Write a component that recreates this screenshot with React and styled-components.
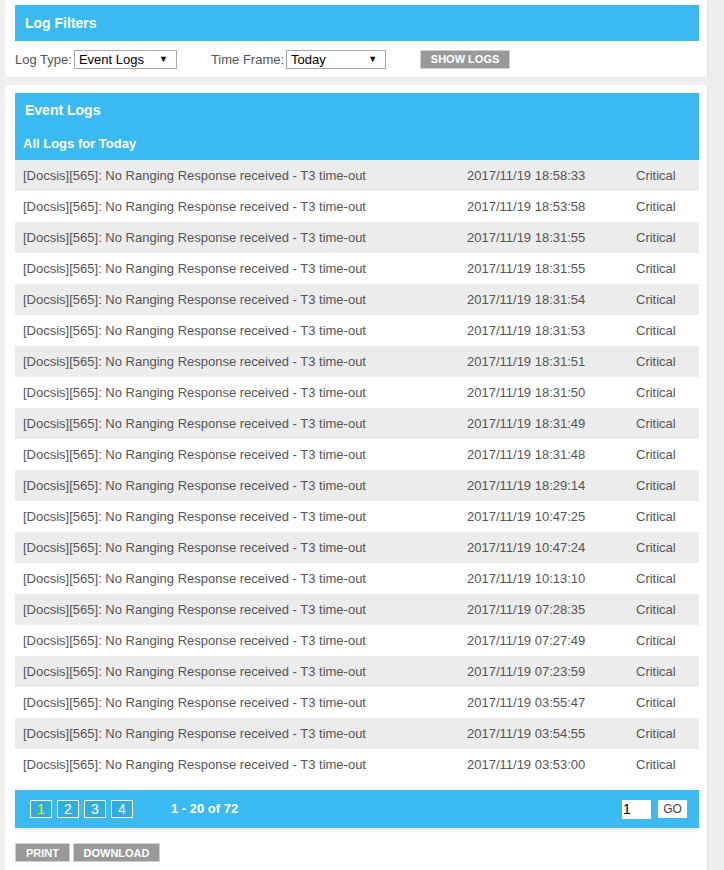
import React from "react";
import styled, { createGlobalStyle } from "styled-components";

const Global = createGlobalStyle`
  html, body { margin: 0; padding: 0; background: #efefef; }
  body { font-family: "Liberation Sans", Arial, sans-serif; color: #555; }
  * { box-sizing: border-box; }
`;

const BLUE = "#3bbaf1";

const Page = styled.div`
  padding: 0 17px 0 5px;
  display: flex;
  flex-direction: column;
  gap: 8px;
`;

const Panel = styled.section`
  background: #fff;
  padding: ${(p) => p.$pad};
  box-shadow: 2px 0 2px rgba(0, 0, 0, 0.04);
`;

const TitleBar = styled.div`
  background: ${BLUE};
  color: #fff;
  font-weight: bold;
  height: ${(p) => p.$h}px;
  display: flex;
  align-items: center;
  padding-left: ${(p) => p.$pl}px;
  font-size: ${(p) => p.$fs}px;
`;

const FilterRow = styled.div`
  height: 36px;
  display: flex;
  align-items: center;
  font-size: 13px;
`;

const Label = styled.span`
  color: #555;
  margin-right: 2px;
  margin-left: ${(p) => p.$ml || 0}px;
  font-size: 13px;
`;

const Select = styled.div`
  position: relative;
  width: ${(p) => p.$w}px;
  height: 19px;
  border: 1px solid #a9a9a9;
  background: #fff;
  color: #000;
  font-size: 13px;
  display: flex;
  align-items: center;
  padding-left: 4px;
`;

const Arrow = styled.span`
  position: absolute;
  right: 8px;
  top: 3px;
  font-size: 9px;
  color: #000;
`;

const GreyButton = styled.button`
  background: #999;
  border: 1px solid #cfcfcf;
  color: #fff;
  font-family: "Liberation Sans", Arial, sans-serif;
  font-weight: bold;
  font-size: 11px;
  width: ${(p) => p.$w}px;
  height: 19px;
  padding: 0;
  margin-left: ${(p) => p.$ml || 0}px;
  display: flex;
  align-items: center;
  justify-content: center;
`;

const Table = styled.div`
  display: flex;
  flex-direction: column;
`;

const Row = styled.div`
  display: grid;
  grid-template-columns: 444px 169px 1fr;
  height: 31px;
  align-items: center;
  padding-left: 8px;
  padding-bottom: 1px;
  font-size: 13px;
  color: #555;
  background: ${(p) => (p.$odd ? "#ececec" : "#fff")};
`;

const Pager = styled.div`
  margin-top: 10px;
  height: 38px;
  background: ${BLUE};
  display: flex;
  align-items: center;
  padding: 0 12px 0 15px;
  box-shadow: 0 2px 4px rgba(0, 0, 0, 0.1);
`;

const PageBoxes = styled.div`
  display: flex;
  gap: 5px;
`;

const PageBox = styled.div`
  width: 22px;
  height: 18px;
  border: 1px solid #fff;
  background: #33abe0;
  color: ${(p) => (p.$active ? "#f2f200" : "#fff")};
  font-size: 14px;
  display: flex;
  align-items: center;
  justify-content: center;
`;

const Range = styled.div`
  color: #fff;
  font-weight: bold;
  font-size: 13px;
  margin-left: 38px;
  margin-top: -2px;
  flex: 1;
`;

const PageInput = styled.input`
  width: 29px;
  height: 19px;
  border: none;
  padding: 0 0 0 1px;
  margin-left: 1px;
  font-family: "Liberation Sans", Arial, sans-serif;
  font-size: 14px;
  color: #000;
  outline: none;
`;

const GoButton = styled.button`
  width: 29px;
  height: 18px;
  margin-left: 7px;
  border: none;
  background: #fff;
  color: #444;
  font-family: "Liberation Sans", Arial, sans-serif;
  font-size: 12px;
  padding: 0;
`;

const Actions = styled.div`
  display: flex;
  gap: 3px;
  margin-top: 15px;
  padding-bottom: 10px;
`;

const times = [
  "18:58:33", "18:53:58", "18:31:55", "18:31:55", "18:31:54", "18:31:53",
  "18:31:51", "18:31:50", "18:31:49", "18:31:48", "18:29:14", "10:47:25",
  "10:47:24", "10:13:10", "07:28:35", "07:27:49", "07:23:59", "03:55:47",
  "03:54:55", "03:53:00",
];

export default function App() {
  return (
    <>
      <Global />
      <Page>
        <Panel $pad="5px 8px 0 10px">
          <TitleBar $h={36} $pl={10} $fs={14}>Log Filters</TitleBar>
          <FilterRow>
            <Label>Log Type:</Label>
            <Select $w={103}>
              Event Logs
              <Arrow>▼</Arrow>
            </Select>
            <Label $ml={34}>Time Frame:</Label>
            <Select $w={100}>
              Today
              <Arrow>▼</Arrow>
            </Select>
            <GreyButton $w={90} $ml={34}>SHOW LOGS</GreyButton>
          </FilterRow>
        </Panel>
        <Panel $pad="8px 8px 0 10px">
          <TitleBar $h={34} $pl={10} $fs={14}>Event Logs</TitleBar>
          <TitleBar $h={33} $pl={8} $fs={13}>All Logs for Today</TitleBar>
          <Table>
            {times.map((t, i) => (
              <Row key={i} $odd={i % 2 === 0}>
                <span>[Docsis][565]: No Ranging Response received - T3 time-out</span>
                <span>2017/11/19 {t}</span>
                <span>Critical</span>
              </Row>
            ))}
          </Table>
          <Pager>
            <PageBoxes>
              <PageBox $active>1</PageBox>
              <PageBox>2</PageBox>
              <PageBox>3</PageBox>
              <PageBox>4</PageBox>
            </PageBoxes>
            <Range>1 - 20 of 72</Range>
            <PageInput defaultValue="1" />
            <GoButton>GO</GoButton>
          </Pager>
          <Actions>
            <GreyButton $w={55}>PRINT</GreyButton>
            <GreyButton $w={87}>DOWNLOAD</GreyButton>
          </Actions>
        </Panel>
      </Page>
    </>
  );
}
